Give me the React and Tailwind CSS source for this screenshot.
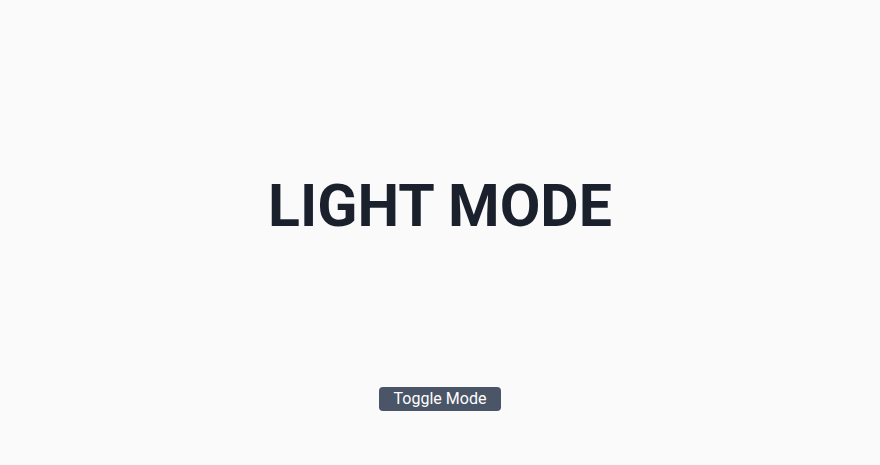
export default function App() {
  return (
    <div className="flex h-screen flex-col items-center bg-[#fafafa] font-['Roboto',sans-serif]">
      <h1 className="mt-[176px] text-[59px] font-bold leading-none text-[#1a202c]">LIGHT MODE</h1>
      <button className="mt-auto mb-[54px] h-6 rounded bg-[#4a5568] px-[15px] font-['Roboto',sans-serif] text-base leading-6 text-white">
        Toggle Mode
      </button>
    </div>
  );
}
